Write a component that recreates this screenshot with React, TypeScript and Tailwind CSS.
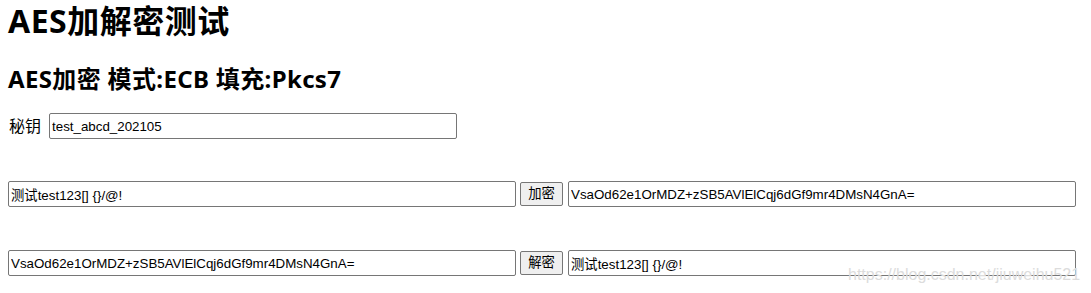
import { useState } from "react";

const HEAD = { fontFamily: '"Noto Sans", "Noto Sans CJK SC", sans-serif' };
const FIELD = { fontFamily: '"Liberation Sans", "Noto Sans CJK SC", sans-serif' };

function Field({ value, className = "" }: { value: string; className?: string }) {
  return (
    <input
      readOnly
      value={value}
      style={FIELD}
      className={`h-[26px] rounded-[2px] border border-[#767676] bg-white px-[2px] text-[13.33px] text-black outline-none ${className}`}
    />
  );
}

function Btn({ label }: { label: string }) {
  return (
    <button
      style={FIELD}
      className="flex h-[24px] w-[43px] items-center justify-center rounded-[2px] border border-[#767676] bg-[#efefef] text-[13.33px] text-black"
    >
      {label}
    </button>
  );
}

export default function App() {
  const [key] = useState("test_abcd_202105");
  const plain = "测试test123[] {}/@!";
  const cipher = "VsaOd62e1OrMDZ+zSB5AVlElCqj6dGf9mr4DMsN4GnA=";

  return (
    <div className="relative h-[293px] w-[1091px] overflow-hidden bg-white pl-2 text-black">
      <h1 style={HEAD} className="mt-px h-10 text-[32px] font-bold leading-10 tracking-[0.5px]">
        AES加解密测试
      </h1>
      <h2 style={HEAD} className="mt-[22px] h-8 text-[24px] font-bold leading-8 tracking-[0.35px]">
        AES加密 模式:ECB 填充:Pkcs7
      </h2>

      <div className="mt-[18px] flex items-center gap-2">
        <span style={HEAD} className="pl-px text-[16px]">秘钥</span>
        <Field value={key} className="w-[408px]" />
      </div>

      <div className="mt-[42px] flex items-center">
        <Field value={plain} className="w-[508px]" />
        <div className="ml-1 mr-[5px]">
          <Btn label="加密" />
        </div>
        <Field value={cipher} className="w-[508px]" />
      </div>

      <div className="mt-[43px] flex items-center">
        <Field value={cipher} className="w-[508px]" />
        <div className="ml-1 mr-[5px]">
          <Btn label="解密" />
        </div>
        <Field value={plain} className="w-[508px]" />
      </div>

      <span
        style={FIELD}
        className="pointer-events-none absolute left-[848px] top-[263px] text-[16px] text-[#dcdcdc]"
      >
        https://blog.csdn.net/jiuweihu521
      </span>
    </div>
  );
}
